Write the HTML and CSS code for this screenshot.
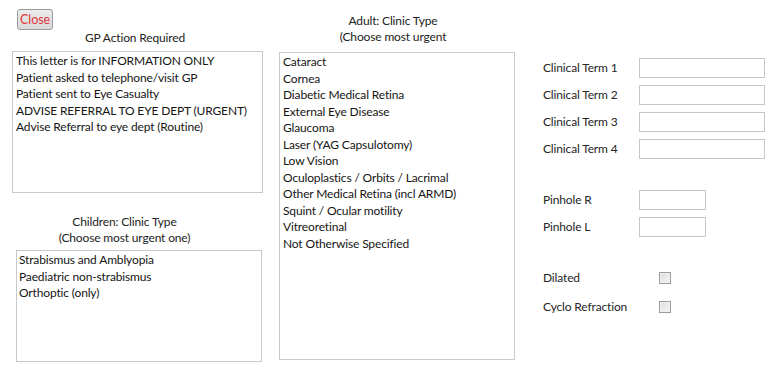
FILE: index.html
```html
<!DOCTYPE html>
<html>
<head>
<meta charset="utf-8">
<link rel="stylesheet" href="styles.css">
</head>
<body>
<div class="page">
  <div class="col1">
    <button class="close">Close</button>
    <div class="title gp-title">GP Action Required</div>
    <div class="listbox gp">
      <div class="item">This letter is for INFORMATION ONLY</div>
      <div class="item">Patient asked to telephone/visit GP</div>
      <div class="item">Patient sent to Eye Casualty</div>
      <div class="item">ADVISE REFERRAL TO EYE DEPT (URGENT)</div>
      <div class="item">Advise Referral to eye dept (Routine)</div>
    </div>
    <div class="title ch-title">Children: Clinic Type<br>(Choose most urgent one)</div>
    <div class="listbox ch">
      <div class="item">Strabismus and Amblyopia</div>
      <div class="item">Paediatric non-strabismus</div>
      <div class="item">Orthoptic (only)</div>
    </div>
  </div>
  <div class="col2">
    <div class="title ad-title">Adult: Clinic Type<br>(Choose most urgent</div>
    <div class="listbox adult">
      <div class="item">Cataract</div>
      <div class="item">Cornea</div>
      <div class="item">Diabetic Medical Retina</div>
      <div class="item">External Eye Disease</div>
      <div class="item">Glaucoma</div>
      <div class="item">Laser (YAG Capsulotomy)</div>
      <div class="item">Low Vision</div>
      <div class="item">Oculoplastics / Orbits / Lacrimal</div>
      <div class="item">Other Medical Retina (incl ARMD)</div>
      <div class="item">Squint / Ocular motility</div>
      <div class="item">Vitreoretinal</div>
      <div class="item">Not Otherwise Specified</div>
    </div>
  </div>
  <div class="col3">
    <div class="group terms">
      <div class="row"><span class="label">Clinical Term 1</span><span class="input wide"></span></div>
      <div class="row"><span class="label">Clinical Term 2</span><span class="input wide"></span></div>
      <div class="row"><span class="label">Clinical Term 3</span><span class="input wide"></span></div>
      <div class="row"><span class="label">Clinical Term 4</span><span class="input wide"></span></div>
    </div>
    <div class="group pinhole">
      <div class="row"><span class="label">Pinhole R</span><span class="input short"></span></div>
      <div class="row"><span class="label">Pinhole L</span><span class="input short"></span></div>
    </div>
    <div class="group checks">
      <div class="row"><span class="label">Dilated</span><span class="check"></span></div>
      <div class="row"><span class="label">Cyclo Refraction</span><span class="check"></span></div>
    </div>
  </div>
</div>
</body>
</html>
```

FILE: styles.css
```css
html, body {
  margin: 0;
  padding: 0;
  background: #ffffff;
}
body {
  font-family: Lato, "Liberation Sans", sans-serif;
  font-size: 12px;
  letter-spacing: -0.15px;
  color: #151515;
  width: 768px;
  height: 370px;
  overflow: hidden;
}
.page {
  display: flex;
  align-items: flex-start;
}
.col1 {
  width: 251px;
  margin-left: 12px;
  display: flex;
  flex-direction: column;
}
.close {
  align-self: flex-start;
  margin: 9px 0 0 5px;
  width: 36px;
  height: 21px;
  padding: 0;
  font-family: inherit;
  font-size: 12.5px;
  letter-spacing: -0.1px;
  color: #e0343a;
  background: linear-gradient(#ececec, #d9d9d9);
  border: 1px solid #9a9a9a;
  border-radius: 3px;
  line-height: 18px;
}
.title {
  line-height: 16px;
  text-align: center;
  color: #222222;
  white-space: nowrap;
}
.gp-title {
  width: 246px;
  margin-bottom: 5px;
}
.listbox {
  box-sizing: border-box;
  border: 1px solid #c9c9c9;
  background: #ffffff;
  padding: 1px 3px;
  line-height: 16.5px;
  color: #151515;
  white-space: nowrap;
  overflow: hidden;
}
.gp {
  width: 251px;
  height: 142px;
}
.ch-title {
  width: 225px;
  margin-top: 21px;
  margin-bottom: 4px;
}
.ch {
  width: 246px;
  height: 112px;
  margin-left: 4px;
  padding-left: 2px;
}
.col2 {
  width: 236px;
  margin-left: 16px;
  display: flex;
  flex-direction: column;
}
.ad-title {
  width: 228px;
  margin-top: 13px;
  margin-bottom: 7px;
}
.adult {
  width: 236px;
  height: 308px;
}
.col3 {
  margin-left: 28px;
  padding-top: 58px;
  display: flex;
  flex-direction: column;
}
.group {
  display: flex;
  flex-direction: column;
  gap: 7px;
}
.pinhole {
  margin-top: 31px;
}
.checks {
  margin-top: 31px;
  gap: 9px;
}
.row {
  display: flex;
  align-items: center;
  height: 20px;
}
.label {
  width: 96px;
  color: #262626;
  white-space: nowrap;
  margin-top: -2px;
}
.input {
  box-sizing: border-box;
  height: 20px;
  border: 1px solid #c6c6c6;
  background: #ffffff;
}
.wide {
  width: 126px;
}
.short {
  width: 67px;
}
.check {
  box-sizing: border-box;
  width: 12px;
  height: 12px;
  margin-left: 20px;
  border: 1px solid #9c9c9c;
  background: linear-gradient(135deg, #dcdcdc, #f6f6f6);
  box-shadow: inset 0 0 0 1px #f0f0f0;
}
```
